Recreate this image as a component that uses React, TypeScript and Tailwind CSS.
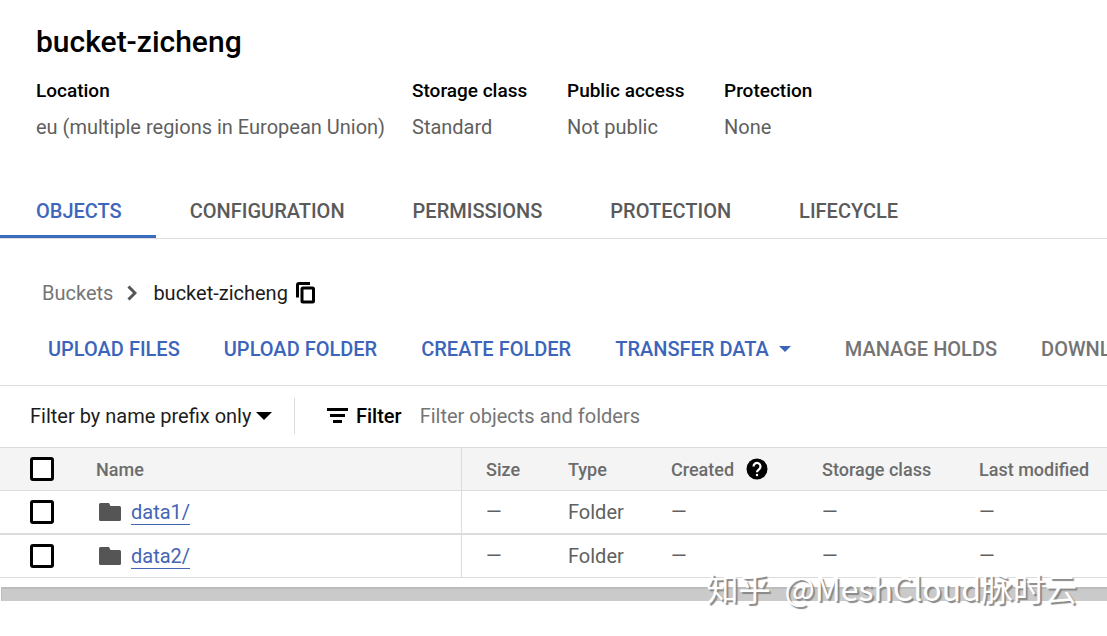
import React from 'react';

const summary = [
  { label: 'Location', value: 'eu (multiple regions in European Union)' },
  { label: 'Storage class', value: 'Standard' },
  { label: 'Public access', value: 'Not public' },
  { label: 'Protection', value: 'None' },
];

const tabs = ['OBJECTS', 'CONFIGURATION', 'PERMISSIONS', 'PROTECTION', 'LIFECYCLE'];

const actions = [
  { label: 'UPLOAD FILES' },
  { label: 'UPLOAD FOLDER' },
  { label: 'CREATE FOLDER' },
  { label: 'TRANSFER DATA', menu: true },
  { label: 'MANAGE HOLDS', disabled: true },
  { label: 'DOWNLOAD', disabled: true },
];

const folders = ['data1/', 'data2/'];

const Caret = ({ className }: { className: string }) => (
  <svg viewBox="0 0 14 7" className={className} fill="currentColor" aria-hidden="true">
    <path d="M0 0h14L7 7z" />
  </svg>
);

const Checkbox = ({ label }: { label: string }) => (
  <input
    type="checkbox"
    aria-label={label}
    className="block size-6 appearance-none rounded-[3px] border-3 border-black bg-white checked:bg-black"
  />
);

const BucketHeader = () => (
  <header className="px-9 pt-6">
    <h1 className="text-[30px] leading-9 font-medium">bucket-zicheng</h1>
    <dl className="mt-5 grid grid-cols-[376px_155px_157px_auto] leading-[22px] whitespace-nowrap">
      {summary.map((item) => (
        <div key={item.label}>
          <dt className="text-[19px] font-medium">{item.label}</dt>
          <dd className="mt-3.5 text-[#5f5f5f]">{item.value}</dd>
        </div>
      ))}
    </dl>
  </header>
);

const Tabs = () => (
  <div role="tablist" className="mt-[46px] flex border-b border-[#dcdcdc]">
    {tabs.map((tab, i) => (
      <button
        key={tab}
        role="tab"
        aria-selected={i === 0}
        className={`h-[54px] shrink-0 border-y-3 border-t-transparent px-[34px] font-medium first:pl-9 ${
          i === 0 ? 'border-b-[#3b6bbd] text-[#3f66bd]' : 'border-b-transparent text-[#5a5a5a]'
        }`}
      >
        {tab}
      </button>
    ))}
  </div>
);

const Breadcrumb = () => (
  <nav aria-label="Breadcrumb" className="mt-[42px] flex h-6 items-center pl-[42px]">
    <a href="#buckets" className="text-[#757575]">Buckets</a>
    <svg viewBox="0 0 10 16" className="mr-4 ml-3.5 h-4 w-2.5" fill="none" stroke="#555" strokeWidth="3" aria-hidden="true">
      <path d="M1.5 1.5 8 8l-6.500 6.500" />
    </svg>
    <span className="text-[#1c1c1c]">bucket-zicheng</span>
    <button aria-label="Copy bucket name" className="ml-2">
      <svg viewBox="0 0 20 22" className="h-[22px] w-5" fill="none" stroke="black" aria-hidden="true">
        <path d="M1.500 15.500V3Q1.500 1.500 3 1.500H14" strokeWidth="3" />
        <rect x="6" y="6" width="11.500" height="14" rx="1" strokeWidth="3" />
      </svg>
    </button>
  </nav>
);

const Toolbar = () => (
  <div className="mt-2 flex h-[73px] items-center gap-11 overflow-hidden border-b border-[#dcdcdc] pl-12">
    {actions.map((action) => (
      <button
        key={action.label}
        disabled={action.disabled}
        className="flex shrink-0 items-center font-medium text-[#3c64bb] disabled:text-[#747474]"
      >
        {action.label}
        {action.menu && <Caret className="mx-2.5 h-1.5 w-3" />}
      </button>
    ))}
  </div>
);

const FilterBar = () => (
  <div className="flex h-[61px] items-center pb-0.5 pl-[30px]">
    <div className="relative flex items-center">
      <select aria-label="Filter mode" className="appearance-none bg-transparent pr-5 text-[#1c1c1c]">
        <option>Filter by name prefix only</option>
      </select>
      <Caret className="pointer-events-none absolute right-0 h-2 w-4" />
    </div>
    <div className="ml-[22px] h-9 w-px bg-[#dcdcdc]" />
    <label htmlFor="filter" className="ml-8 flex items-center font-medium">
      <svg viewBox="0 0 21 15" className="mr-2 h-[15px] w-[21px]" aria-hidden="true">
        <path d="M0 0h21v3H0zM3 6h15v3H3zM6 12h9v3H6z" />
      </svg>
      Filter
    </label>
    <input
      id="filter"
      type="text"
      placeholder="Filter objects and folders"
      className="ml-[18px] min-w-0 flex-1 outline-none placeholder:text-[#757575]"
    />
  </div>
);

const ObjectsTable = () => (
  <table className="w-full table-fixed border-separate border-spacing-0 text-left whitespace-nowrap text-[#606060]">
    <colgroup>
      <col className="w-24" />
      <col />
      <col className="w-[82px]" />
      <col className="w-[103px]" />
      <col className="w-[151px]" />
      <col className="w-[157px]" />
      <col className="w-[152px]" />
    </colgroup>
    <thead>
      <tr className="h-11 bg-[#f4f4f4] text-[18px] text-[#6c6c6c] *:border-y *:border-[#dcdcdc] *:font-medium">
        <th className="pl-[30px]"><Checkbox label="Select all" /></th>
        <th className="border-r">Name</th>
        <th className="pl-6">Size</th>
        <th className="pl-6">Type</th>
        <th className="pl-6">
          <div className="flex items-center">
            Created
            <button aria-label="About created time" className="ml-3">
              <svg viewBox="0 0 22 22" className="size-[22px]" fill="none" stroke="white" aria-hidden="true">
                <circle cx="11" cy="11" r="10.5" fill="black" stroke="none" />
                <path d="M7.500 8.500a3.500 3.500 0 1 1 5.800 2.600C12 12.200 11 12.700 11 14.300" strokeWidth="2.200" />
                <path d="M9.900 17h2.200" strokeWidth="2.200" />
              </svg>
            </button>
          </div>
        </th>
        <th className="pl-6">Storage class</th>
        <th className="pl-6">Last modified</th>
      </tr>
    </thead>
    <tbody>
      {folders.map((name) => (
        <tr key={name} className="h-11 *:border-b-2 *:border-[#dcdcdc] last:h-[43px] last:*:border-b">
          <td className="pl-[30px]"><Checkbox label={`Select ${name}`} /></td>
          <td className="border-r">
            <div className="flex items-center">
              <svg viewBox="0 0 22 18" className="mr-2.5 ml-[3px] h-[18px] w-[22px]" fill="#555" aria-hidden="true">
                <path d="M1.500 0H10l1.500 3H20.500Q22 3 22 4.500V16.500Q22 18 20.500 18H1.500Q0 18 0 16.500V1.500Q0 0 1.500 0z" />
              </svg>
              <a href={`#${name}`} className="border-b border-current leading-6 text-[#4464b4]">{name}</a>
            </div>
          </td>
          <td className="pl-6">—</td>
          <td className="pl-6">Folder</td>
          <td className="pl-6">—</td>
          <td className="pl-6">—</td>
          <td className="pl-6">—</td>
        </tr>
      ))}
    </tbody>
  </table>
);

export default function App() {
  return (
    <main className="relative overflow-hidden bg-white font-[Roboto,sans-serif] text-[20px] text-black">
      <BucketHeader />
      <Tabs />
      <Breadcrumb />
      <Toolbar />
      <FilterBar />
      <ObjectsTable />
      <div className="mt-[9px] mb-9 ml-px h-3.5 border-t-2 border-l border-[#bcbcbc] bg-[#cacaca]" />
      <div className="pointer-events-none absolute right-[30px] bottom-[26px] flex gap-3.5 font-['Noto_Sans_CJK_SC',sans-serif] text-[32px] text-white [text-shadow:2px_2px_1px_#888]">
        <span>知乎</span>
        <span>@MeshCloud脉时云</span>
      </div>
    </main>
  );
}
